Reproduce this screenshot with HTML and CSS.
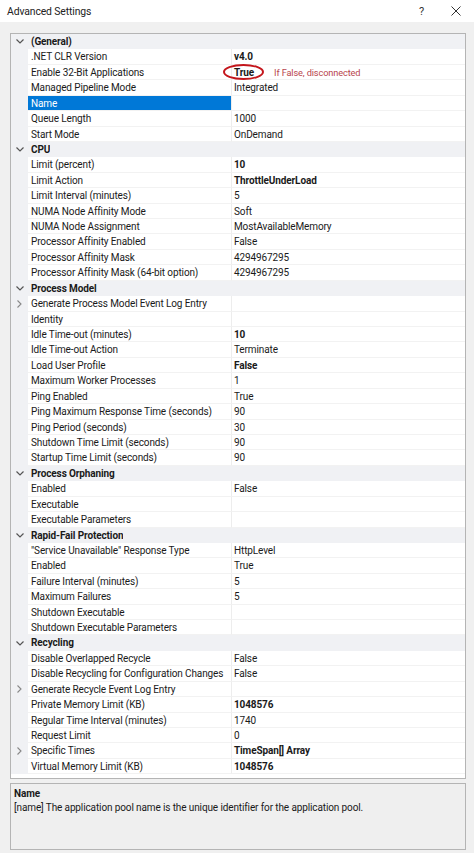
FILE: index.html
```html
<!DOCTYPE html>
<html>
<head>
<meta charset="utf-8">
<link rel="stylesheet" href="styles.css">
</head>
<body>
<div class="window">
  <div class="titlebar">
    <span class="title">Advanced Settings</span>
    <span class="tb-btns"><span class="help">?</span><svg class="close" width="10" height="10" viewBox="0 0 10 10"><path d="M0.5 0.5L9.5 9.5M9.5 0.5L0.5 9.5" stroke="#333" stroke-width="1"/></svg></span>
  </div>
  <div class="grid">
    <div class="row cat"><span class="gut"><svg class="chev" width="8" height="5" viewBox="0 0 8 5"><path d="M0.5 0.5L4 4L7.5 0.5" fill="none" stroke="#555" stroke-width="1.2"/></svg></span><span class="nm">(General)</span></div>
    <div class="row"><span class="gut"></span><span class="nm">.NET CLR Version</span><span class="val b">v4.0</span></div>
    <div class="row"><span class="gut"></span><span class="nm">Enable 32-Bit Applications</span><span class="val"><span class="b circled">True</span><span class="note">If False, disconnected</span></span></div>
    <div class="row"><span class="gut"></span><span class="nm">Managed Pipeline Mode</span><span class="val">Integrated</span></div>
    <div class="row"><span class="gut"></span><span class="nm sel">Name</span><span class="val"></span></div>
    <div class="row"><span class="gut"></span><span class="nm">Queue Length</span><span class="val">1000</span></div>
    <div class="row"><span class="gut"></span><span class="nm">Start Mode</span><span class="val">OnDemand</span></div>

    <div class="row cat"><span class="gut"><svg class="chev" width="8" height="5" viewBox="0 0 8 5"><path d="M0.5 0.5L4 4L7.5 0.5" fill="none" stroke="#555" stroke-width="1.2"/></svg></span><span class="nm">CPU</span></div>
    <div class="row"><span class="gut"></span><span class="nm">Limit (percent)</span><span class="val b">10</span></div>
    <div class="row"><span class="gut"></span><span class="nm">Limit Action</span><span class="val b">ThrottleUnderLoad</span></div>
    <div class="row"><span class="gut"></span><span class="nm">Limit Interval (minutes)</span><span class="val">5</span></div>
    <div class="row"><span class="gut"></span><span class="nm">NUMA Node Affinity Mode</span><span class="val">Soft</span></div>
    <div class="row"><span class="gut"></span><span class="nm">NUMA Node Assignment</span><span class="val">MostAvailableMemory</span></div>
    <div class="row"><span class="gut"></span><span class="nm">Processor Affinity Enabled</span><span class="val">False</span></div>
    <div class="row"><span class="gut"></span><span class="nm">Processor Affinity Mask</span><span class="val">4294967295</span></div>
    <div class="row"><span class="gut"></span><span class="nm">Processor Affinity Mask (64-bit option)</span><span class="val">4294967295</span></div>

    <div class="row cat"><span class="gut"><svg class="chev" width="8" height="5" viewBox="0 0 8 5"><path d="M0.5 0.5L4 4L7.5 0.5" fill="none" stroke="#555" stroke-width="1.2"/></svg></span><span class="nm">Process Model</span></div>
    <div class="row"><span class="gut"><svg class="exp" width="5" height="8" viewBox="0 0 5 8"><path d="M0.5 0.5L4 4L0.5 7.5" fill="none" stroke="#888" stroke-width="1.1"/></svg></span><span class="nm">Generate Process Model Event Log Entry</span><span class="val"></span></div>
    <div class="row"><span class="gut"></span><span class="nm">Identity</span><span class="val"></span></div>
    <div class="row"><span class="gut"></span><span class="nm">Idle Time-out (minutes)</span><span class="val b">10</span></div>
    <div class="row"><span class="gut"></span><span class="nm">Idle Time-out Action</span><span class="val">Terminate</span></div>
    <div class="row"><span class="gut"></span><span class="nm">Load User Profile</span><span class="val b">False</span></div>
    <div class="row"><span class="gut"></span><span class="nm">Maximum Worker Processes</span><span class="val">1</span></div>
    <div class="row"><span class="gut"></span><span class="nm">Ping Enabled</span><span class="val">True</span></div>
    <div class="row"><span class="gut"></span><span class="nm">Ping Maximum Response Time (seconds)</span><span class="val">90</span></div>
    <div class="row"><span class="gut"></span><span class="nm">Ping Period (seconds)</span><span class="val">30</span></div>
    <div class="row"><span class="gut"></span><span class="nm">Shutdown Time Limit (seconds)</span><span class="val">90</span></div>
    <div class="row"><span class="gut"></span><span class="nm">Startup Time Limit (seconds)</span><span class="val">90</span></div>

    <div class="row cat"><span class="gut"><svg class="chev" width="8" height="5" viewBox="0 0 8 5"><path d="M0.5 0.5L4 4L7.5 0.5" fill="none" stroke="#555" stroke-width="1.2"/></svg></span><span class="nm">Process Orphaning</span></div>
    <div class="row"><span class="gut"></span><span class="nm">Enabled</span><span class="val">False</span></div>
    <div class="row"><span class="gut"></span><span class="nm">Executable</span><span class="val"></span></div>
    <div class="row"><span class="gut"></span><span class="nm">Executable Parameters</span><span class="val"></span></div>

    <div class="row cat"><span class="gut"><svg class="chev" width="8" height="5" viewBox="0 0 8 5"><path d="M0.5 0.5L4 4L7.5 0.5" fill="none" stroke="#555" stroke-width="1.2"/></svg></span><span class="nm">Rapid-Fail Protection</span></div>
    <div class="row"><span class="gut"></span><span class="nm">"Service Unavailable" Response Type</span><span class="val">HttpLevel</span></div>
    <div class="row"><span class="gut"></span><span class="nm">Enabled</span><span class="val">True</span></div>
    <div class="row"><span class="gut"></span><span class="nm">Failure Interval (minutes)</span><span class="val">5</span></div>
    <div class="row"><span class="gut"></span><span class="nm">Maximum Failures</span><span class="val">5</span></div>
    <div class="row"><span class="gut"></span><span class="nm">Shutdown Executable</span><span class="val"></span></div>
    <div class="row"><span class="gut"></span><span class="nm">Shutdown Executable Parameters</span><span class="val"></span></div>

    <div class="row cat"><span class="gut"><svg class="chev" width="8" height="5" viewBox="0 0 8 5"><path d="M0.5 0.5L4 4L7.5 0.5" fill="none" stroke="#555" stroke-width="1.2"/></svg></span><span class="nm">Recycling</span></div>
    <div class="row"><span class="gut"></span><span class="nm">Disable Overlapped Recycle</span><span class="val">False</span></div>
    <div class="row"><span class="gut"></span><span class="nm">Disable Recycling for Configuration Changes</span><span class="val">False</span></div>
    <div class="row"><span class="gut"><svg class="exp" width="5" height="8" viewBox="0 0 5 8"><path d="M0.5 0.5L4 4L0.5 7.5" fill="none" stroke="#888" stroke-width="1.1"/></svg></span><span class="nm">Generate Recycle Event Log Entry</span><span class="val"></span></div>
    <div class="row"><span class="gut"></span><span class="nm">Private Memory Limit (KB)</span><span class="val b">1048576</span></div>
    <div class="row"><span class="gut"></span><span class="nm">Regular Time Interval (minutes)</span><span class="val">1740</span></div>
    <div class="row"><span class="gut"></span><span class="nm">Request Limit</span><span class="val">0</span></div>
    <div class="row"><span class="gut"><svg class="exp" width="5" height="8" viewBox="0 0 5 8"><path d="M0.5 0.5L4 4L0.5 7.5" fill="none" stroke="#888" stroke-width="1.1"/></svg></span><span class="nm">Specific Times</span><span class="val b">TimeSpan[] Array</span></div>
    <div class="row last"><span class="gut"></span><span class="nm">Virtual Memory Limit (KB)</span><span class="val b">1048576</span></div>
  </div>
  <div class="desc">
    <div class="desc-title">Name</div>
    <div class="desc-text">[name] The application pool name is the unique identifier for the application pool.</div>
  </div>
</div>
</body>
</html>
```

FILE: styles.css
```css
html, body {
  margin: 0;
  padding: 0;
}
body {
  background: #f0f0f0;
  font-family: Roboto, "Noto Sans", sans-serif;
  font-size: 10px;
  letter-spacing: -0.12px;
  color: #1a1a1a;
  width: 474px;
  height: 853px;
  overflow: hidden;
}
.window {
  display: flex;
  flex-direction: column;
  height: 853px;
}
.titlebar {
  height: 22px;
  background: #ffffff;
  display: flex;
  align-items: center;
  justify-content: space-between;
  padding: 0 13px 0 7px;
}
.title {
  font-size: 10.4px;
  color: #222;
}
.tb-btns {
  display: flex;
  align-items: center;
  gap: 27px;
}
.help {
  font-size: 11px;
  color: #333;
}
.grid {
  margin: 11px 8px 0 10px;
  border: 1px solid #b4b4b4;
  background: #ffffff;
  padding-bottom: 4px;
}
.row {
  display: flex;
  height: 15.43px;
  line-height: 15px;
  position: relative;
}
.gut {
  width: 17px;
  flex: none;
  background: #f0f1f4;
  display: flex;
  align-items: center;
  justify-content: center;
}
.nm {
  width: 200px;
  flex: none;
  padding-left: 3px;
  border-bottom: 1px solid #f2f2f2;
  border-right: 1px solid #ededed;
  white-space: nowrap;
  overflow: hidden;
}
.val {
  flex: 1;
  padding-left: 2px;
  border-bottom: 1px solid #f2f2f2;
  white-space: nowrap;
}
.b {
  font-weight: bold;
}
.cat {
  background: #f0f1f4;
}
.cat .nm {
  font-weight: bold;
  border: none;
  width: auto;
}
.sel {
  background: #0078d7;
  color: #ffffff;
}
.circled {
  position: relative;
}
.circled::after {
  content: "";
  position: absolute;
  left: -11px;
  top: -2.5px;
  width: 37px;
  height: 12px;
  border: 2px solid #c4161c;
  border-radius: 50%;
}
.note {
  color: #b8454d;
  font-size: 9.2px;
  margin-left: 20px;
}
.desc {
  margin: 4px 8px 3px 10px;
  border: 1px solid #b4b4b4;
  background: #efefef;
  flex: 1;
  padding: 3px 3px;
}
.desc-title {
  font-weight: bold;
  line-height: 14px;
}
.desc-text {
  line-height: 14px;
}
```
